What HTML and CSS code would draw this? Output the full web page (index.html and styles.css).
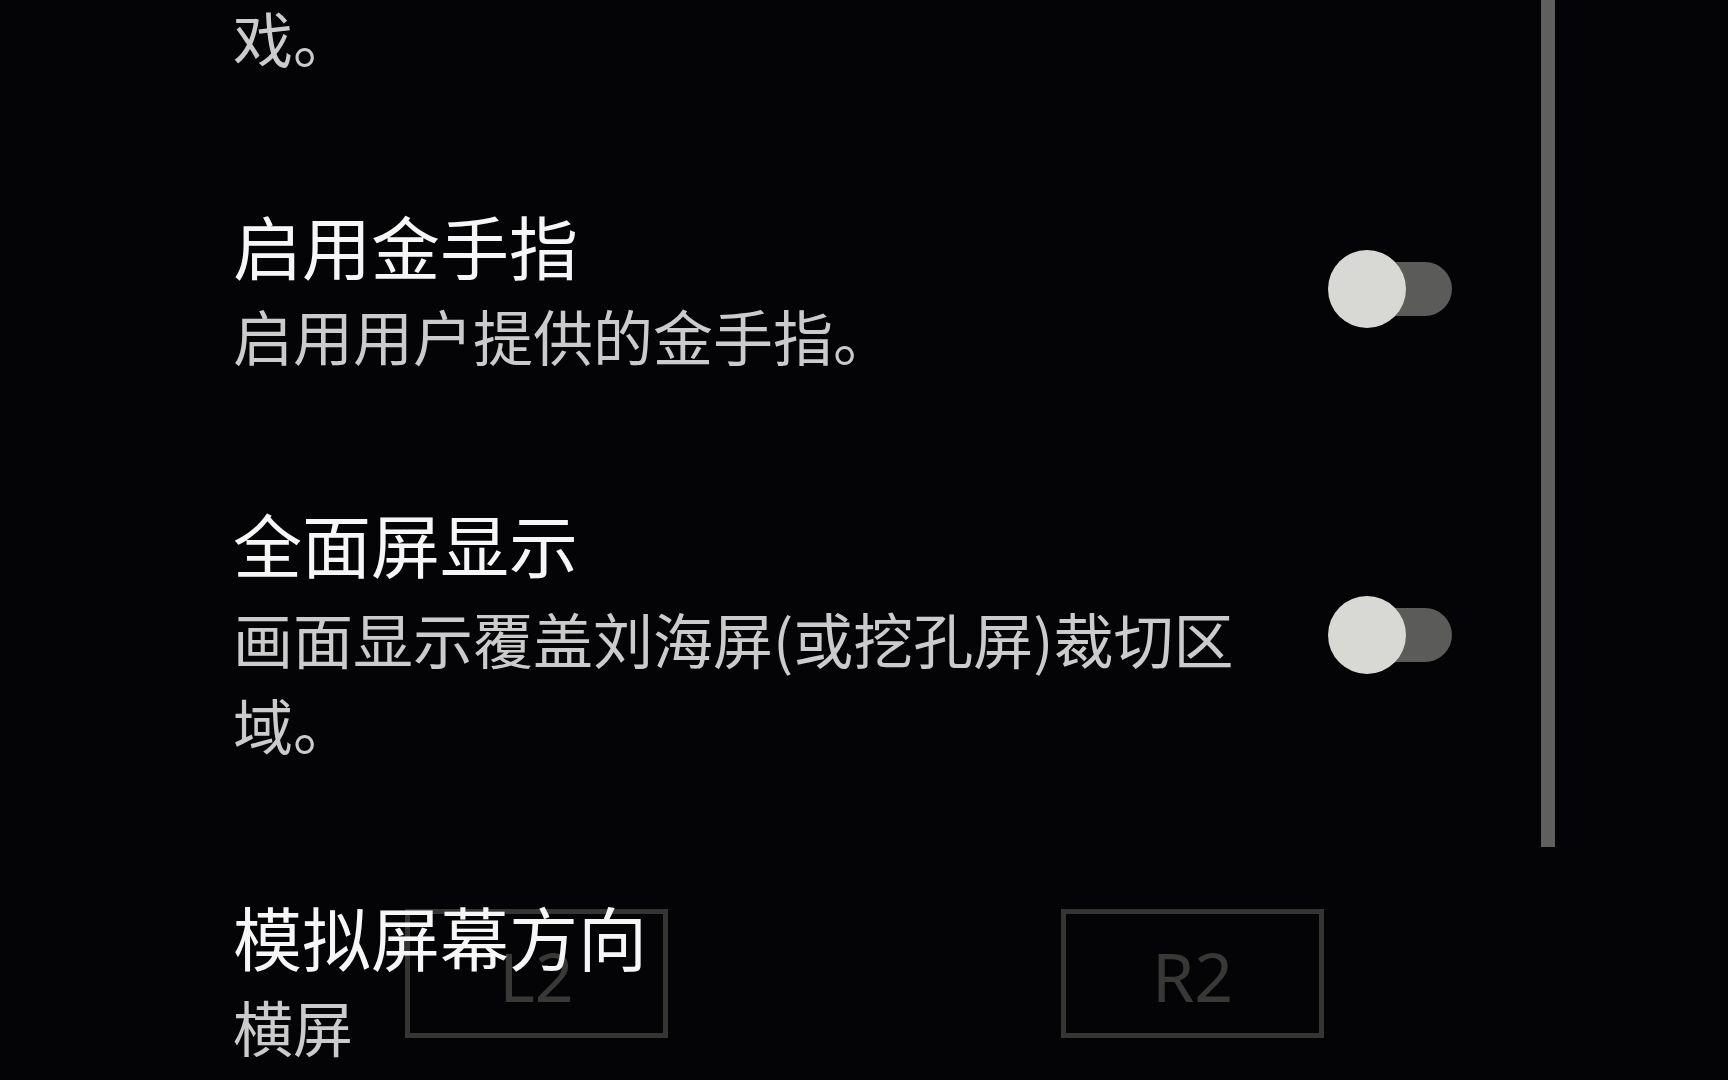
FILE: index.html
```html
<!DOCTYPE html>
<html lang="zh-CN">
<head>
<meta charset="utf-8">
<title>设置</title>
<link rel="stylesheet" href="styles.css">
</head>
<body>
<main class="screen">
  <section class="settings">
    <div class="row row--cut">
      <div class="row-text">
        <p class="desc">戏。</p>
      </div>
    </div>
    <div class="row">
      <div class="row-text">
        <p class="title">启用金手指</p>
        <p class="desc">启用用户提供的金手指。</p>
      </div>
      <div class="switch"><span class="track"></span><span class="thumb"></span></div>
    </div>
    <div class="row">
      <div class="row-text">
        <p class="title">全面屏显示</p>
        <p class="desc desc--mixed">画面显示覆盖刘海屏(或挖孔屏)裁切区域。</p>
      </div>
      <div class="switch"><span class="track"></span><span class="thumb"></span></div>
    </div>
    <div class="row">
      <div class="row-text">
        <p class="title">模拟屏幕方向</p>
        <p class="desc">横屏</p>
      </div>
    </div>
  </section>
  <div class="scrollbar"></div>
  <div class="pad-overlay">
    <div class="pad-btn">L2</div>
    <div class="pad-btn">R2</div>
  </div>
</main>
</body>
</html>
```
FILE: styles.css
```css
html, body {
  margin: 0;
  padding: 0;
  background: #040406;
}
body {
  width: 1728px;
  height: 1080px;
  overflow: hidden;
  font-family: "Noto Sans CJK SC", "Noto Sans", sans-serif;
}
.screen {
  position: relative;
  width: 1728px;
  height: 1080px;
  overflow: hidden;
}
.settings {
  position: relative;
  z-index: 1;
  margin-top: -7px;
  padding: 0 276px 0 233px;
}
.row {
  display: flex;
  align-items: center;
  gap: 60px;
  padding: 59px 0;
}
.row--cut {
  padding-top: 0;
}
.row-text {
  flex: 1;
  min-width: 0;
}
.title {
  margin: 0;
  font-size: 69px;
  line-height: 92px;
  color: #f6f6f6;
}
.desc {
  margin: 0;
  font-size: 60px;
  line-height: 88px;
  color: #cbcbcb;
}
.desc--mixed {
  padding-top: 6px;
  padding-bottom: 5px;
  line-height: 86px;
}
.switch {
  position: relative;
  flex: none;
  width: 124px;
  height: 78px;
}
.track {
  position: absolute;
  right: 0;
  top: 12px;
  width: 110px;
  height: 54px;
  border-radius: 27px;
  background: #5b5b59;
}
.thumb {
  position: absolute;
  left: 0;
  top: 0;
  width: 78px;
  height: 78px;
  border-radius: 50%;
  background: #d8d8d5;
}
.scrollbar {
  position: absolute;
  top: 0;
  left: 1541px;
  width: 14px;
  height: 847px;
  background: #5f5f5e;
}
.pad-overlay {
  position: absolute;
  z-index: 0;
  top: 909px;
  left: 405px;
  display: flex;
  gap: 393px;
}
.pad-btn {
  box-sizing: border-box;
  width: 263px;
  height: 129px;
  border: 5px solid #353533;
  display: flex;
  align-items: center;
  justify-content: center;
  font-family: "Noto Sans", "Open Sans", sans-serif;
  font-size: 68px;
  line-height: 1;
  color: #383836;
  padding-top: 4px;
}
```
